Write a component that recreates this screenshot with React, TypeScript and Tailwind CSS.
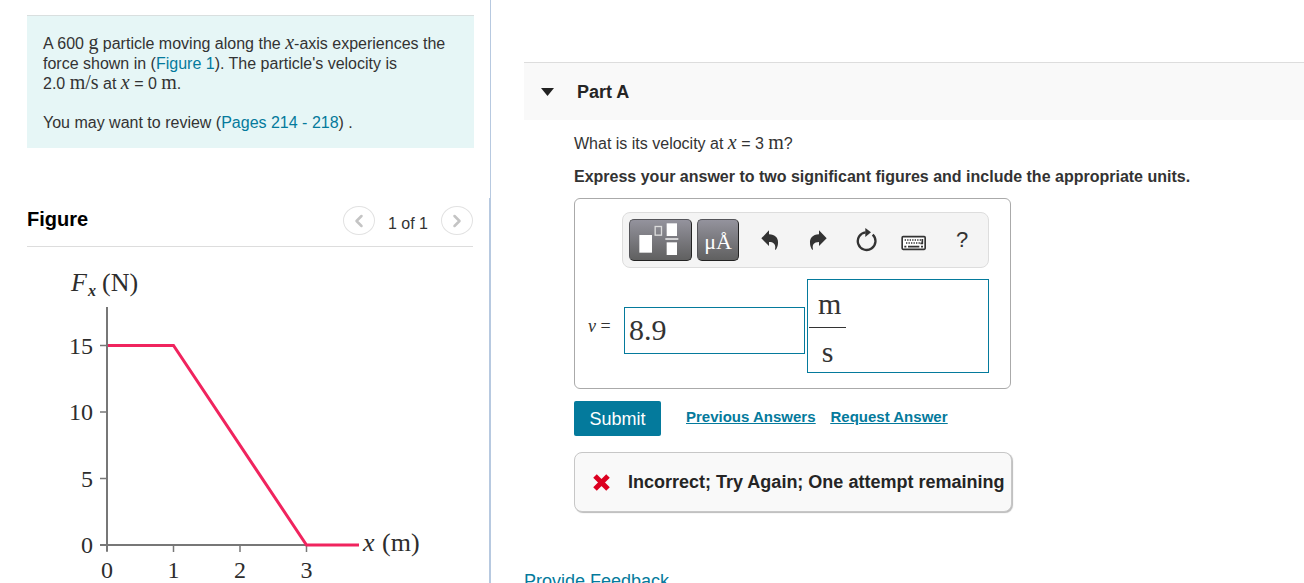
import React, { useState } from 'react';
import { ChevronLeft, ChevronRight } from 'lucide-react';

const MathText: React.FC<{ children: React.ReactNode; italic?: boolean }> = ({ children, italic }) => (
  <span className={`font-['Liberation_Serif',serif] text-[20px] leading-0 ${italic ? 'italic' : ''}`}>{children}</span>
);

const UndoIcon: React.FC<{ flip?: boolean }> = ({ flip }) => (
  <svg viewBox="0 0 54 63" className={`w-[18px] h-[21px] ${flip ? '-scale-x-100' : ''}`} fill="#333" aria-hidden="true">
    <path d="M1 25 L24 1 V13 C44 14 52 25 51 39 C51 47 48 54 44 60 L42 58 C45 45 40 36 24 36 V48 Z" />
  </svg>
);

const ResetIcon = () => (
  <svg viewBox="0 0 66 72" className="w-[22px] h-[24px]" aria-hidden="true">
    <path d="M53 20 A26.500 26.500 0 1 1 32 13" fill="none" stroke="#333" strokeWidth="7" />
    <path d="M31 0 L48 13 L31 27 Z" fill="#333" />
  </svg>
);

const KeyboardIcon = () => (
  <svg viewBox="0 0 78 60" className="w-[26px] h-[20px] mt-[3px]" aria-hidden="true">
    <rect x="3.500" y="14" width="69" height="38" rx="3" fill="#fff" stroke="#333" strokeWidth="5" />
    <g stroke="#333" strokeWidth="5" fill="none">
      <path d="M11 24 H60" strokeDasharray="4 3.500" />
      <path d="M15 33 H58" strokeDasharray="4 3.500" />
      <path d="M64 21 V36 M58 34 H66" />
      <path d="M10 44 H16 M21 44 H55 M60 44 H66" />
    </g>
  </svg>
);

const TemplatesIcon = () => (
  <svg viewBox="0 0 132 102" className="w-[44px] h-[34px]" aria-hidden="true">
    <rect x="1" y="36" width="38" height="53" fill="#fff" />
    <rect x="48.500" y="10.500" width="19" height="26" fill="none" stroke="#dcdcdc" strokeWidth="4" />
    <rect x="83" y="1" width="31" height="38" fill="#fff" />
    <rect x="79" y="46" width="39" height="4" fill="#fff" />
    <rect x="83" y="58" width="31" height="38" fill="#fff" />
  </svg>
);

const ForceChart = () => {
  const yTicks = [15, 10, 5, 0];
  const xTicks = [0, 1, 2, 3];
  const px = (x: number) => 80 + x * 66.5;
  const py = (y: number) => 298 - y * 13.3;

  return (
    <svg viewBox="0 0 446 340" className="block w-full font-['Liberation_Serif',serif] text-[24px]" fill="#2d2d2d" role="img" aria-label="Force versus position">
      <text x="44" y="44" fontSize="26" fontStyle="italic">F</text>
      <text x="61" y="49" fontSize="16" fontStyle="italic" fontWeight="bold">x</text>
      <text x="75" y="44" fontSize="26">(N)</text>
      <path d="M80 60 V304 M73 298 H280" stroke="#777" strokeWidth="2" fill="none" />
      {yTicks.map(y => (
        <g key={y}>
          <path d={`M73 ${py(y)} H80`} stroke="#777" strokeWidth="1.500" />
          <text x="66" y={py(y) + 8} textAnchor="end">{y}</text>
        </g>
      ))}
      {xTicks.map(x => (
        <g key={x}>
          <path d={`M${px(x)} 298 V305`} stroke="#777" strokeWidth="1.500" />
          <text x={px(x)} y="331" textAnchor="middle">{x}</text>
        </g>
      ))}
      <path d={`M81 ${py(15)} H${px(1)} L${px(3)} 298 H332`} stroke="#f0245e" strokeWidth="3" fill="none" />
      <text x="336" y="304" fontSize="26" fontStyle="italic">x</text>
      <text x="355" y="304" fontSize="26">(m)</text>
    </svg>
  );
};

const toolButton = 'w-12 h-[42px] flex items-center justify-center';
const darkButton = 'h-[42px] flex items-center justify-center rounded-[5px] border border-[#55555a] border-r-[#222] border-b-[#222] bg-linear-to-b from-[#94939d] to-[#606060] text-white';
const pagerButton = 'w-8 h-[29px] flex items-center justify-center rounded-[50%] border border-[#e2e2e2] text-[#c4c4c4]';

const App: React.FC = () => {
  const [value, setValue] = useState('8.9');
  const [numerator, setNumerator] = useState('m');
  const [denominator, setDenominator] = useState('s');

  return (
    <div className="flex h-screen overflow-hidden bg-white text-[#333] font-['Liberation_Sans',Arial,sans-serif] text-[16px] leading-5">

      {/* Problem and figure */}
      <aside className="w-[491px] shrink-0 flex flex-col">
        <section className="border-r border-[#b7c9e0] pt-[15px] pl-[27px] pr-4 pb-[50px]">
          <div className="border-t border-[#d9dfdf] bg-[#e6f6f6] px-4 pt-[18px] pb-[15px]">
            <p>
              A 600 <MathText>g</MathText> particle moving along the <MathText italic>x</MathText>-axis experiences the force shown in (<a href="#figure" className="text-[#047a9c]">Figure 1</a>). The particle's velocity is<br />
              2.0 <MathText>m/s</MathText> at <MathText italic>x</MathText> = 0 <MathText>m</MathText>.
            </p>
            <p className="mt-[19px]">
              You may want to review (<a href="#pages" className="text-[#047a9c]">Pages 214 - 218</a>) .
            </p>
          </div>
        </section>

        <section id="figure" className="grow border-r-2 border-[#b7c9e0] pl-[27px] pr-4">
          <div className="flex items-center justify-between h-[49px] pb-[3px] border-b border-[#ddd]">
            <h2 className="text-[20px] font-bold text-black pb-1">Figure</h2>
            <div className="flex items-center gap-[13px]">
              <button aria-label="Previous figure" className={pagerButton}>
                <ChevronLeft className="w-5 h-5" strokeWidth={3} />
              </button>
              <span className="pt-1.5">1 of 1</span>
              <button aria-label="Next figure" className={pagerButton}>
                <ChevronRight className="w-5 h-5" strokeWidth={3} />
              </button>
            </div>
          </div>
          <ForceChart />
        </section>
      </aside>

      {/* Answer area */}
      <main className="grow min-w-0 pt-[62px] pl-[33px]">
        <button aria-expanded="true" className="w-full h-[58px] flex items-center gap-[23px] pl-[17px] border-t border-[#ddd] bg-[#f9f9f9] text-[18px] font-bold text-[#252525]">
          <svg viewBox="0 0 13 8" className="w-[13px] h-2" fill="#222" aria-hidden="true">
            <path d="M0 0 H13 L6.500 8 Z" />
          </svg>
          Part A
        </button>

        <div className="pl-[50px] pt-3.5">
          <p>What is its velocity at <MathText italic>x</MathText> = 3 <MathText>m</MathText>?</p>
          <p className="mt-[13px] font-bold">Express your answer to two significant figures and include the appropriate units.</p>

          <form onSubmit={e => e.preventDefault()}>
            <div className="mt-[11px] w-[437px] rounded-md border border-[#aaa] pt-[13px] pr-[21px] pb-[15px]">
              <div className="ml-[47px] flex items-center h-14 pl-1.5 rounded-lg border border-[#ddd] bg-[#f4f4f4]">
                <button type="button" aria-label="Templates" className={`${darkButton} w-[63px] mr-[5px]`}><TemplatesIcon /></button>
                <button type="button" aria-label="Units" className={`${darkButton} w-[42px] mr-[7px] pt-1 font-['Liberation_Serif',serif] text-[22px]`}>μÅ</button>
                <button type="button" aria-label="Undo" className={toolButton}><UndoIcon /></button>
                <button type="button" aria-label="Redo" className={toolButton}><UndoIcon flip /></button>
                <button type="button" aria-label="Reset" className={toolButton}><ResetIcon /></button>
                <button type="button" aria-label="Keyboard shortcuts" className={toolButton}><KeyboardIcon /></button>
                <button type="button" aria-label="Help" className={`${toolButton} text-[22px]`}>?</button>
              </div>

              <div className="mt-[11px] flex items-center font-['Liberation_Serif',serif]">
                <label htmlFor="velocity" className="w-[49px] pl-[13px] text-[18px] whitespace-nowrap"><i>v</i> =</label>
                <input
                  id="velocity"
                  value={value}
                  onChange={e => setValue(e.target.value)}
                  className="w-[181px] h-[47px] mt-2 pl-1 border border-[#047a9c] text-[30px]"
                />
                <div className="ml-0.5 grow h-[94px] flex flex-col items-start border border-[#047a9c] pl-px">
                  <input
                    aria-label="Unit numerator"
                    value={numerator}
                    onChange={e => setNumerator(e.target.value)}
                    className="w-[37px] h-12 pl-[9px] border-b border-[#333] text-[30px]"
                  />
                  <input
                    aria-label="Unit denominator"
                    value={denominator}
                    onChange={e => setDenominator(e.target.value)}
                    className="w-[37px] h-11 pt-1 text-center text-[30px]"
                  />
                </div>
              </div>
            </div>

            <div className="mt-3 flex items-center">
              <button type="submit" className="w-[87px] h-[35px] rounded-[2px] bg-[#047a9c] text-[18px] text-white">Submit</button>
              <div className="flex gap-[15px] pl-[25px] pb-1 text-[15px] font-bold underline text-[#047a9c]">
                <a href="#previous">Previous Answers</a>
                <a href="#request">Request Answer</a>
              </div>
            </div>
          </form>

          <div role="status" className="mt-4 w-[438px] h-[60px] flex items-center pl-[18px] rounded-lg border border-[#c7c7c7] bg-[#f9f9f9] shadow-[1px_1px_1px_#bbb] text-[18px] font-bold text-[#252525] whitespace-nowrap">
            <svg viewBox="0 0 17 17" className="w-[17px] h-[17px] mr-[18px]" aria-hidden="true">
              <path d="M2 2 L15 15 M15 2 L2 15" stroke="#dc0020" strokeWidth="5" />
            </svg>
            Incorrect; Try Again; One attempt remaining
          </div>
        </div>

        <a href="#feedback" className="block mt-[59px] text-[18px] text-[#047a9c]">Provide Feedback</a>
      </main>
    </div>
  );
};

export default App;
